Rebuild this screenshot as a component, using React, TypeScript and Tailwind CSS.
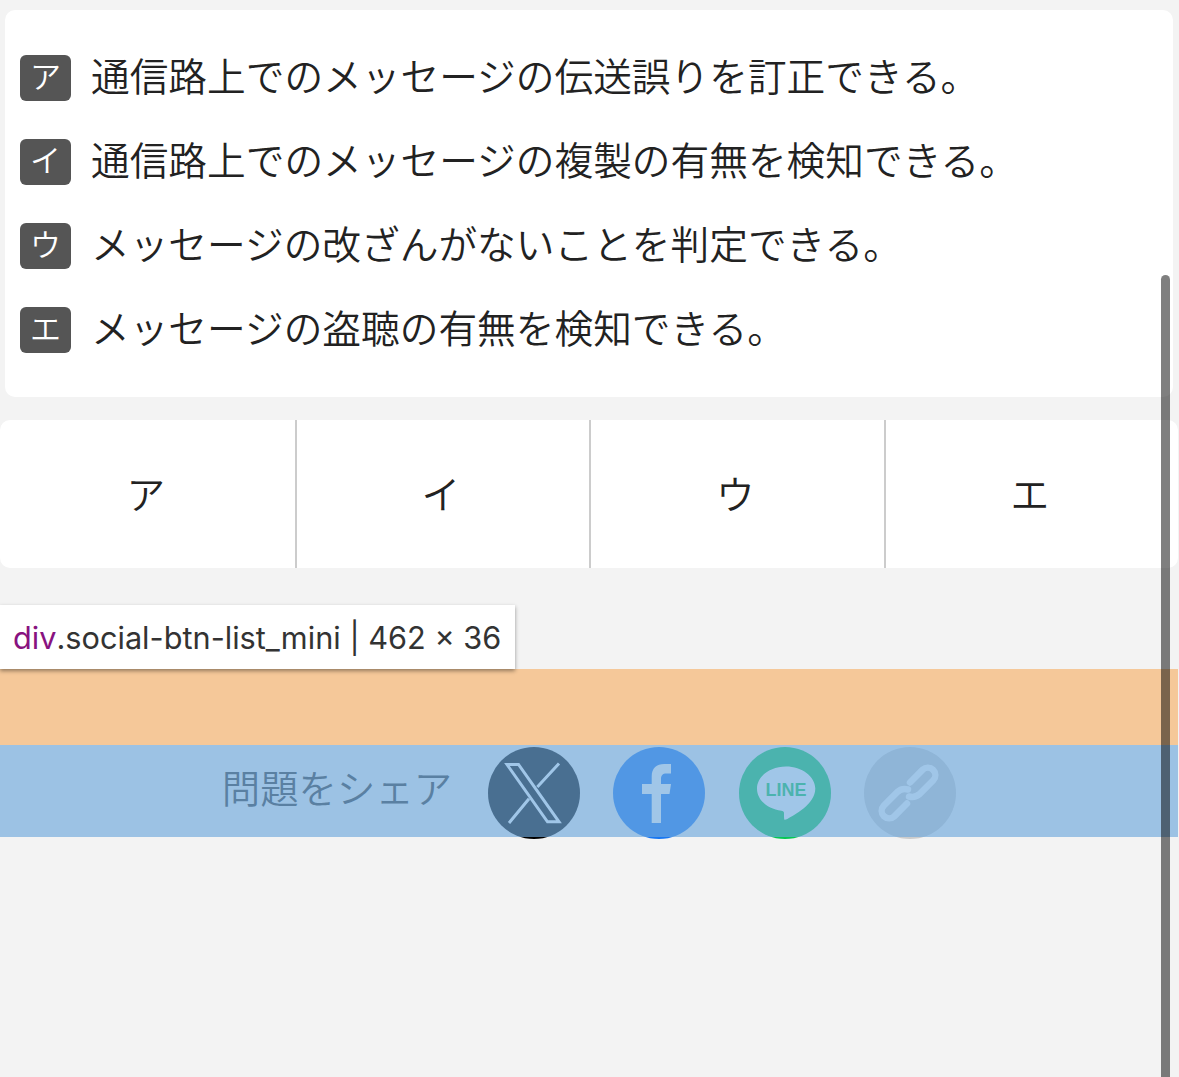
import React from "react";

const choices = [
  { label: "ア", text: "通信路上でのメッセージの伝送誤りを訂正できる。" },
  { label: "イ", text: "通信路上でのメッセージの複製の有無を検知できる。" },
  { label: "ウ", text: "メッセージの改ざんがないことを判定できる。" },
  { label: "エ", text: "メッセージの盗聴の有無を検知できる。" },
];

const answers = ["ア", "イ", "ウ", "エ"];

const XIcon = () => (
  <svg width="92" height="92" viewBox="0 0 92 92" fill="none" stroke="#fff" strokeWidth="3">
    <path d="M19 17.500h11.500L71 74.800H59.500z" />
    <path d="M71 16.500 49.300 40M41 51.700 21 76" />
  </svg>
);

const FacebookIcon = () => (
  <svg width="92" height="92" viewBox="0 0 92 92" fill="#fff">
    <path d="M38.700 76V47H29V37h9.700v-7.500c0-8.500 5-12.500 12.500-12.500H58v9.500h-4.500c-4 0-5.500 2-5.500 5.500V37h10l-1.500 10H48v29z" />
  </svg>
);

const LineIcon = () => (
  <svg width="92" height="92" viewBox="0 0 92 92">
    <path
      d="M47 19.500c-16 0-29 10-29 22 0 11.500 10.500 20.500 24.500 22.300.8.1 2.500.7 2.500 2 0 1.500 0 6 .3 6.700.3.5 1.500.3 3-.5 6-3.500 28-14.500 28-30.500C76 29.500 63 19.500 47 19.500z"
      fill="#fff"
    />
    <text
      x="47"
      y="49"
      textAnchor="middle"
      fontSize="18"
      fontWeight="700"
      fill="#06c755"
      fontFamily="'Liberation Sans', sans-serif"
    >
      LINE
    </text>
  </svg>
);

const LinkIcon = () => (
  <svg
    width="92"
    height="92"
    viewBox="0 0 92 92"
    fill="none"
    stroke="#fff"
    strokeWidth="6.5"
    strokeLinecap="round"
  >
    <path d="M46 35.500 58.700 22.700A7.500 7.500 0 0 1 69.300 33.300L55.300 47.300Q51 51 45 49.500" />
    <path d="M43 56.500 30.300 69.300A7.500 7.500 0 0 1 19.700 58.700L33.700 44.700Q38 41 44 42.500" />
  </svg>
);

export default function App() {
  return (
    <div className="relative h-[1077px] w-[1179px] overflow-hidden bg-[#f3f3f3] pt-[10px] font-['Noto_Sans_CJK_JP','Noto_Sans',sans-serif] text-[#222]">
      {/* question choices */}
      <div className="ml-[5px] flex w-[1168px] flex-col gap-[38px] rounded-[10px] bg-white pt-[45px] pb-[44px] pl-[15px]">
        {choices.map((c) => (
          <div key={c.label} className="flex h-[46px] items-center gap-[20px]">
            <span className="flex h-[46px] w-[51px] items-center justify-center rounded-[6px] bg-[#555] pb-[6px] text-[31px] font-[350] text-white">
              {c.label}
            </span>
            <span className="pb-[8px] text-[38.7px] leading-[46px] font-[350] whitespace-nowrap">
              {c.text}
            </span>
          </div>
        ))}
      </div>

      {/* answer buttons */}
      <div className="mt-[23px] flex h-[148px] w-[1178px] overflow-hidden rounded-[10px] bg-white">
        {answers.map((a, i) => (
          <div
            key={a}
            className={
              i > 0
                ? "flex w-[294.5px] shrink-0 items-center justify-center border-l-2 border-[#ccc] pr-[4px] pb-[4px] text-[38.7px] font-[350]"
                : "flex w-[294.5px] shrink-0 items-center justify-center border-l-2 border-transparent pr-[5px] pb-[4px] text-[38.7px] font-[350]"
            }
          >
            {a}
          </div>
        ))}
      </div>

      {/* share row with the devtools highlight on top */}
      <div className="relative mt-[177px] flex h-[92px] w-[1178px] items-start justify-center gap-[33.5px] pt-[2px] text-[#333]">
        <span className="mr-[2px] pb-[13px] self-center text-[38.4px] leading-[46px] font-[350]">
          問題をシェア
        </span>
        <span className="size-[92px] shrink-0 rounded-full bg-black">
          <XIcon />
        </span>
        <span className="size-[92px] shrink-0 rounded-full bg-[#1877f2]">
          <FacebookIcon />
        </span>
        <span className="size-[92px] shrink-0 rounded-full bg-[#06c755]">
          <LineIcon />
        </span>
        <span className="size-[92px] shrink-0 rounded-full bg-[#ccc]">
          <LinkIcon />
        </span>

        <div className="absolute inset-0 bg-[#6fa8dc]/66" />
        <div className="absolute inset-x-0 top-[-76px] h-[76px] bg-[#f6b26b]/66" />
        <div className="absolute top-[-140px] left-0 flex h-[64px] w-[515px] items-center bg-white pt-[2px] pl-[13px] font-['Inter',sans-serif] text-[30.7px] whitespace-nowrap shadow-[0_2px_4px_rgba(0,0,0,0.4)]">
          <span className="text-[#881280]">div</span>
          <span className="text-[#333]">.social-btn-list_mini | 462 × 36</span>
        </div>
      </div>

      {/* scrollbar */}
      <div className="absolute top-[275px] right-[9px] bottom-0 w-[9px] rounded-t-full bg-black/50" />
    </div>
  );
}
